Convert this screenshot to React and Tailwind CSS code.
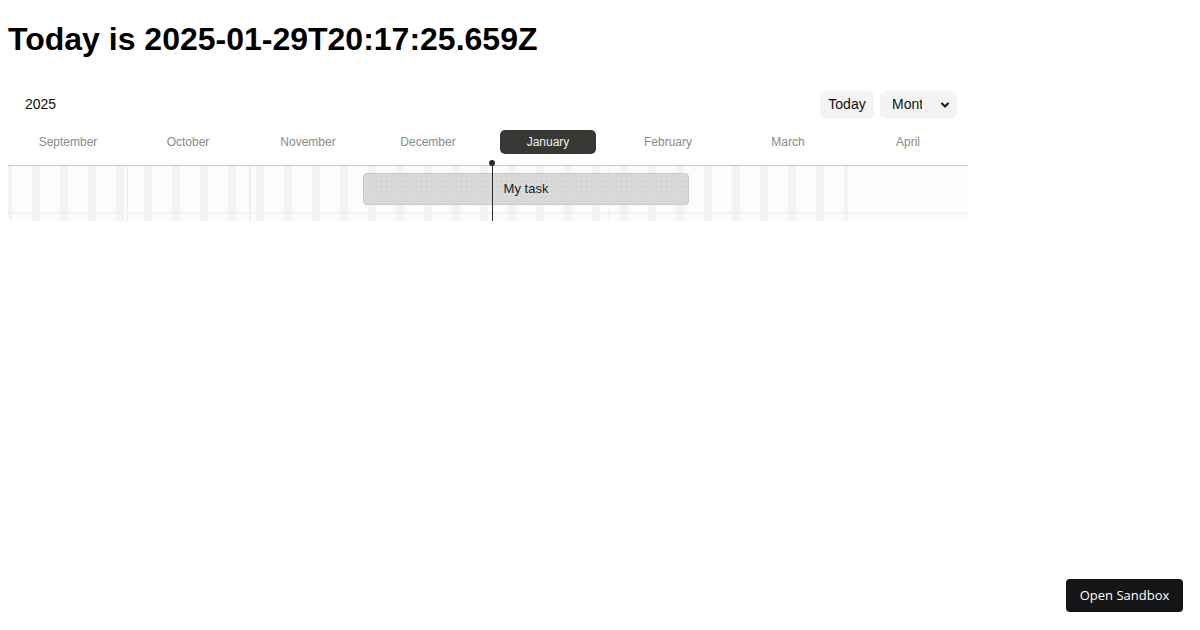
import React from "react";
import { ChevronDown } from "lucide-react";

const months = ["September", "October", "November", "December", "January", "February", "March", "April"];

// one day = 4px, Sept 1 2024 (a Sunday) is day 0
function GridBackground() {
  const stripes = [];
  for (let i = 0; i < 210; i++) {
    if (i % 7 === 0 || i % 7 === 6) {
      stripes.push(<rect key={i} x={i * 4} y={0} width={4} height={55} fill="#f3f3f3" />);
    }
  }
  return (
    <svg width="960" height="55" className="block">
      <rect x="0" y="0" width="960" height="55" fill="#fcfcfc" />
      {stripes}
      <rect x="119" y="0" width="1" height="55" fill="#ececec" />
      <rect x="241" y="0" width="2" height="55" fill="#f0f0f0" />
      <line x1="360.5" y1="0" x2="360.5" y2="55" stroke="#e6e6e6" strokeDasharray="1 2" />
      <line x1="600.5" y1="0" x2="600.5" y2="55" stroke="#e6e6e6" strokeDasharray="1 2" />
      <line x1="727.5" y1="0" x2="727.5" y2="55" stroke="#e6e6e6" strokeDasharray="1 2" />
      <rect x="0" y="46" width="960" height="2" fill="#f2f2f2" />
    </svg>
  );
}

const dotted = "bg-[#f4f4f4] bg-[radial-gradient(#dcdcdc_0.6px,transparent_0.6px)] bg-[length:4px_4px]";

export default function App() {
  return (
    <div className="min-h-screen bg-white px-2 font-['Liberation_Sans',Arial,sans-serif] text-black">
      <h1 className="mt-[21.44px] mb-[22.5px] text-[32px] font-bold leading-[36.8px]">
        Today is 2025-01-29T20:17:25.659Z
      </h1>

      <div className="w-[960px]">
        {/* Header */}
        <div className="flex h-12 items-center justify-between pl-[17px] pr-[11px]">
          <span className="text-[14px] text-[#111]">2025</span>
          <div className="flex items-center gap-1.5">
            <button className={`h-7 w-[54px] rounded-md text-[14px] text-[#111] ${dotted}`}>Today</button>
            <div className={`flex h-7 w-[77px] items-center rounded-md pl-3 pr-1 text-[14px] text-[#111] ${dotted}`}>
              <span className="w-[30px] overflow-hidden whitespace-nowrap">Month</span>
              <ChevronDown size={12} strokeWidth={4} className="ml-auto mr-[2px] text-[#111]" />
            </div>
          </div>
        </div>

        <div className="relative">
          {/* Month labels */}
          <div className="grid h-[37px] grid-cols-8 border-b border-[#c6c6c6] pt-px">
            {months.map((m) => (
              <div key={m} className="flex h-6 items-center justify-center">
                {m === "January" ? (
                  <span className="flex h-6 w-24 items-center justify-center rounded-[5px] bg-[#393733] text-[12px] text-[#eeeeee]">
                    {m}
                  </span>
                ) : (
                  <span className="text-[12px] text-[#8a8a8a]">{m}</span>
                )}
              </div>
            ))}
          </div>

          {/* Grid body */}
          <div className="relative h-[55px] overflow-hidden rounded-bl-md">
            <GridBackground />
            <div className="absolute left-[355px] top-[7px] flex h-8 w-[326px] items-center justify-center rounded border border-[#c9c9c9] bg-[#d9d9d9] bg-[radial-gradient(#c8c8c8_0.6px,transparent_0.6px)] bg-[length:5px_5px] text-[13px] text-[#222]">
              My task
            </div>
          </div>

          {/* Today marker */}
          <div className="absolute left-[481px] top-[31px] h-1.5 w-1.5 rounded-full bg-[#2a2a2a]" />
          <div className="absolute bottom-0 left-[484px] top-[34px] w-px bg-[#2a2a2a]" />
        </div>
      </div>

      <button className="fixed bottom-[18px] right-[17px] h-[33px] w-[117px] rounded bg-[#151515] font-['Open_Sans',sans-serif] text-[13px] font-medium text-white">
        Open Sandbox
      </button>
    </div>
  );
}
